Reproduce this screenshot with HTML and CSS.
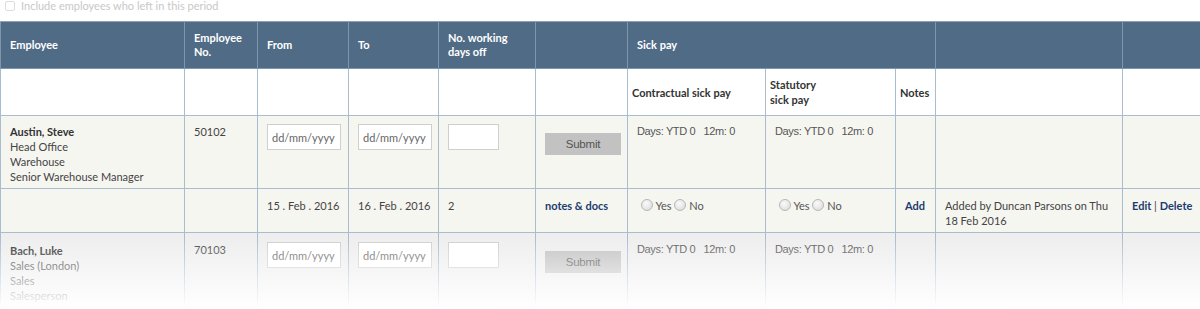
FILE: index.html
```html
<!DOCTYPE html>
<html>
<head>
<meta charset="utf-8">
<link rel="stylesheet" href="styles.css">
</head>
<body>
<div class="page">
  <div class="topline"><span class="cb"></span>Include employees who left in this period</div>
  <table class="grid">
    <colgroup>
      <col class="c1"><col class="c2"><col class="c3"><col class="c4"><col class="c5"><col class="c6"><col class="c7"><col class="c8"><col class="c9"><col class="c10"><col class="c11">
    </colgroup>
    <thead>
      <tr class="head">
        <th>Employee</th>
        <th>Employee<br>No.</th>
        <th>From</th>
        <th>To</th>
        <th>No. working<br>days off</th>
        <th></th>
        <th colspan="3">Sick pay</th>
        <th></th>
        <th></th>
      </tr>
    </thead>
    <tbody>
      <tr class="sub">
        <td></td><td></td><td></td><td></td><td></td><td></td>
        <td class="subh">Contractual sick pay</td>
        <td class="subh">Statutory<br>sick pay</td>
        <td class="subh">Notes</td>
        <td></td><td></td>
      </tr>
      <tr class="emp">
        <td><b class="name">Austin, Steve</b><br>Head Office<br>Warehouse<br>Senior Warehouse Manager</td>
        <td>50102</td>
        <td><input class="date" type="text" placeholder="dd/mm/yyyy"></td>
        <td><input class="date" type="text" placeholder="dd/mm/yyyy"></td>
        <td><input class="days" type="text"></td>
        <td><button class="submit">Submit</button></td>
        <td class="ytd">Days: YTD 0&nbsp;&nbsp;&nbsp;12m: 0</td>
        <td class="ytd">Days: YTD 0&nbsp;&nbsp;&nbsp;12m: 0</td>
        <td></td><td></td><td></td>
      </tr>
      <tr class="rec">
        <td></td>
        <td></td>
        <td>15 . Feb . 2016</td>
        <td>16 . Feb . 2016</td>
        <td>2</td>
        <td><a class="lnk">notes &amp; docs</a></td>
        <td class="radios"><span class="rd"></span> Yes <span class="rd"></span> No</td>
        <td class="radios"><span class="rd"></span> Yes <span class="rd"></span> No</td>
        <td><a class="lnk">Add</a></td>
        <td>Added by Duncan Parsons on Thu 18 Feb 2016</td>
        <td class="acts"><a class="lnk">Edit</a> | <a class="lnk">Delete</a></td>
      </tr>
      <tr class="emp last">
        <td><b class="name">Bach, Luke</b><br>Sales (London)<br>Sales<br>Salesperson</td>
        <td>70103</td>
        <td><input class="date" type="text" placeholder="dd/mm/yyyy"></td>
        <td><input class="date" type="text" placeholder="dd/mm/yyyy"></td>
        <td><input class="days" type="text"></td>
        <td><button class="submit">Submit</button></td>
        <td class="ytd">Days: YTD 0&nbsp;&nbsp;&nbsp;12m: 0</td>
        <td class="ytd">Days: YTD 0&nbsp;&nbsp;&nbsp;12m: 0</td>
        <td></td><td></td><td></td>
      </tr>
    </tbody>
  </table>
  <div class="fade"></div>
</div>
</body>
</html>
```

FILE: styles.css
```css
html, body {
  margin: 0;
  padding: 0;
  background: #ffffff;
}
.page {
  position: relative;
  width: 1200px;
  height: 309px;
  overflow: hidden;
  font-family: Lato, "Liberation Sans", sans-serif;
  font-size: 11px;
  color: #444;
}
.topline {
  margin-top: 0;
  height: 12px;
  line-height: 12px;
  padding-left: 5px;
  color: #c8c8c8;
  font-size: 11px;
  margin-bottom: 9px;
  display: flex;
  align-items: center;
  gap: 6px;
}
.cb {
  display: inline-block;
  width: 8px;
  height: 8px;
  border: 1px solid #ddd;
  border-radius: 2px;
}
.grid {
  border-collapse: collapse;
  table-layout: fixed;
  width: 1200px;
}
.c1 { width: 184px; }
.c2 { width: 73px; }
.c3 { width: 91px; }
.c4 { width: 90px; }
.c5 { width: 97px; }
.c6 { width: 92px; }
.c7 { width: 138px; }
.c8 { width: 130px; }
.c9 { width: 40px; }
.c10 { width: 187px; }
.c11 { width: 78px; }
.grid th, .grid td {
  border: 1px solid #a9bdd0;
  text-align: left;
  vertical-align: top;
  padding: 8px 3px 4px 9px;
  line-height: 15px;
}
.head th {
  background: #506b85;
  color: #fff;
  font-weight: bold;
  font-size: 11px;
  height: 46px;
  padding: 0 9px;
  vertical-align: middle;
  line-height: 14px;
  border-color: #7f97ae;
  border-top-color: #8ea3b8;
}
.sub td {
  background: #fff;
  height: 46px;
  vertical-align: middle;
  padding: 0 4px;
}
.subh {
  font-weight: bold;
  color: #333;
  line-height: 15px;
}
.emp td {
  background: #f6f6f1;
  height: 60px;
}
.rec td {
  background: #f6f6f1;
  height: 30px;
  padding-top: 9px;
  padding-bottom: 4px;
}
.name { color: #333; }
.date {
  box-sizing: border-box;
  display: block;
  width: 74px;
  height: 26px;
  border: 1px solid #cfcfcf;
  background: #fff;
  font-family: Lato, "Liberation Sans", sans-serif;
  font-size: 11px;
  padding: 0 4px;
  margin: 0;
  color: #555;
}
.date::placeholder { color: #666; }
.days {
  box-sizing: border-box;
  display: block;
  width: 51px;
  height: 26px;
  border: 1px solid #cfcfcf;
  background: #fff;
  margin: 0;
}
.submit {
  display: block;
  margin-top: 9px;
  width: 76px;
  height: 22px;
  border: 1px solid #c2c2c2;
  background: #c2c2c2;
  color: #555;
  font-family: "Liberation Sans", Arial, sans-serif;
  font-size: 11.5px;
  letter-spacing: -0.2px;
  padding: 0;
}
.ytd {
  font-family: "Liberation Sans", Arial, sans-serif;
  font-size: 11px;
  letter-spacing: -0.35px;
  color: #555;
  padding-left: 9px !important;
}
.lnk {
  color: #1d3c6e;
  font-weight: bold;
  text-decoration: none;
}
.radios {
  padding-left: 13px !important;
  color: #555;
  white-space: nowrap;
}
.acts {
  white-space: nowrap;
  padding-right: 2px !important;
}
.rd {
  display: inline-block;
  width: 10px;
  height: 10px;
  border: 1px solid #b8b8b8;
  border-radius: 50%;
  background: radial-gradient(circle at 40% 35%, #fafafa, #d8d8d8);
  vertical-align: -1px;
}
.last td {
  background: #eeeeee;
  padding-top: 9px;
}
.last td:first-child {
  padding-top: 10px;
}
.fade {
  position: absolute;
  left: 0;
  right: 0;
  top: 236px;
  bottom: 0;
  background: linear-gradient(to bottom, rgba(255,255,255,0) 0%, rgba(255,255,255,0.55) 55%, rgba(255,255,255,1) 100%);
}
```
